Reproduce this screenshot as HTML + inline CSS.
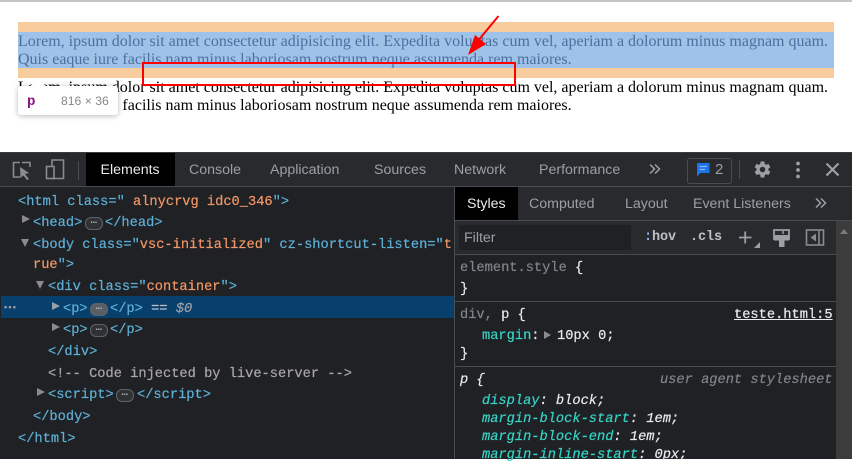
<!DOCTYPE html>
<html><head><meta charset="utf-8">
<style>
html,body{margin:0;padding:0;width:852px;height:459px;overflow:hidden;background:#fff}
.a{position:absolute;white-space:pre}
.box{position:absolute}
.s{font-family:"Liberation Serif",serif;font-size:16px;line-height:18px;color:#000}
.m{font-family:"Liberation Mono",monospace;font-size:13.7px;line-height:18px;color:#9aa0a6;-webkit-text-stroke:.2px}
.t{font-family:"Liberation Sans",sans-serif;font-size:14.2px;line-height:18px;color:#9aa0a6}
.b{color:#5db0d7}.o{color:#f29766}.l{color:#e8eaed}.g{color:#35d4c7}.i{font-style:italic}
.tri-r{position:absolute;width:0;height:0;border-left:8px solid #8b8b8b;border-top:4.5px solid transparent;border-bottom:4.5px solid transparent}
.tri-d{position:absolute;width:0;height:0;border-top:8px solid #8b8b8b;border-left:4.5px solid transparent;border-right:4.5px solid transparent}
.dots{position:absolute;width:16px;height:11px;border:1px solid #5f6368;background:#303134;border-radius:6px;color:#bdc1c6;font:bold 5px/11px "Liberation Sans",sans-serif;text-align:center;letter-spacing:.5px}
</style></head><body>
<div class="box" style="left:0;top:0;width:852px;height:2px;background:#c8c4c6"></div>

<div class="box" style="left:18px;top:22px;width:816px;height:56px;background:#f9cc9d"></div>
<div class="box" style="left:18px;top:32px;width:816px;height:36px;background:#9fc3e8"></div>
<div class="a s" style="left:18px;top:33px;color:#4d6f9f">Lorem, ipsum dolor sit amet consectetur adipisicing elit. Expedita voluptas cum vel, aperiam a dolorum minus magnam quam.</div>
<div class="a s" style="left:18px;top:51px;color:#4d6f9f">Quis eaque iure facilis nam minus laboriosam nostrum neque assumenda rem maiores.</div>
<div class="a s" style="left:18px;top:79px">Lorem, ipsum dolor sit amet consectetur adipisicing elit. Expedita voluptas cum vel, aperiam a dolorum minus magnam quam.</div>
<div class="a s" style="left:18px;top:97px">Quis eaque iure facilis nam minus laboriosam nostrum neque assumenda rem maiores.</div>

<div class="box" style="left:18px;top:86px;width:100px;height:29px;background:#fff;border-radius:3px;box-shadow:0 1px 6px rgba(0,0,0,.28)"></div>
<div class="box" style="left:29px;top:80px;width:0;height:0;border-left:9px solid transparent;border-right:9px solid transparent;border-bottom:7px solid #fff"></div>
<div class="a" style="left:27px;top:94px;font:bold 14px/16px 'Liberation Mono',monospace;color:#881280">p</div>
<div class="a" style="left:61px;top:93px;font:12.2px/16px 'Liberation Sans',sans-serif;color:#888">816 × 36</div>

<div class="box" style="left:142px;top:62px;width:370px;height:20px;border:2px solid #f00"></div>
<svg class="box" style="left:460px;top:10px" width="45" height="50" viewBox="0 0 45 50"><line x1="38.500" y1="6" x2="17" y2="32" stroke="#f00" stroke-width="2"/><polygon points="8,45 15,25 26,34" fill="#f00"/></svg>

<!-- devtools -->
<div class="box" style="left:0;top:152px;width:852px;height:307px;background:#202124"></div>
<div class="box" style="left:0;top:153px;width:852px;height:33px;background:#292a2d;border-bottom:1px solid #494c50"></div>
<div class="box" style="left:0;top:152px;width:852px;height:1px;background:#3c3c3c"></div>

<svg class="box" style="left:0;top:152px" width="90" height="34" viewBox="0 0 90 34" fill="none" stroke="#8a8b8d" stroke-width="1.600">
<path d="M20 10.500 H13.500 V25 H20 M22 10.500 H30 V15"/>
<path d="M20 15 L29 21 L25 22 L29 27 L27 28 L23.500 23.500 L20.500 26 Z" fill="#8a8b8d" stroke="none"/>
<path d="M52 14 V8 H63.500 V26.500 H52"/>
<rect x="46.500" y="14.500" width="7.500" height="12"/>
<line x1="78.500" y1="9" x2="78.500" y2="28" stroke="#4a4c50" stroke-width="1"/>
</svg>

<div class="box" style="left:86px;top:153px;width:89px;height:33px;background:#000"></div>
<div class="a t" style="left:100.500px;top:161px;color:#e8eaed">Elements</div>
<div class="a t" style="left:189px;top:161px">Console</div>
<div class="a t" style="left:270px;top:161px">Application</div>
<div class="a t" style="left:374px;top:161px">Sources</div>
<div class="a t" style="left:454px;top:161px">Network</div>
<div class="a t" style="left:539px;top:161px">Performance</div>
<svg class="box" style="left:648px;top:162px" width="14" height="14" viewBox="0 0 14 14" fill="none" stroke="#9aa0a6" stroke-width="1.500"><path d="M2 2.500 L6.500 7 L2 11.500 M7 2.500 L11.500 7 L7 11.500"/></svg>

<div class="box" style="left:687px;top:157.500px;width:43px;height:24px;border:1px solid #4a4c50;border-radius:3px"></div>
<svg class="box" style="left:696px;top:162px" width="15" height="16" viewBox="0 0 15 16"><path d="M1 1 H13.500 V11 H4.500 L1 14.500 Z" fill="#1a73e8"/><path d="M3.500 4.500 H11 M3.500 7.500 H9" stroke="#cfe2fb" stroke-width="1.200" stroke-opacity=".6"/></svg>
<div class="a" style="left:715px;top:161px;font:15px/18px 'Liberation Sans',sans-serif;color:#9aa0a6">2</div>
<div class="box" style="left:739px;top:160px;width:1px;height:19px;background:#4a4c50"></div>
<svg class="box" style="left:753px;top:160px" width="19" height="19" viewBox="0 0 24 24"><path fill="#9aa0a6" fill-rule="evenodd" d="M19.400 13a7.500 7.500 0 0 0 0-2l2.500-1.900-2.400-4.200-3 1.200a7.500 7.500 0 0 0-1.700-1L14.400 1.900H9.600L9.200 5.100a7.500 7.500 0 0 0-1.700 1l-3-1.200L2.100 9.100 4.600 11a7.500 7.500 0 0 0 0 2l-2.500 1.900 2.400 4.200 3-1.200a7.500 7.500 0 0 0 1.700 1l.4 3.200h4.800l.4-3.200a7.500 7.500 0 0 0 1.700-1l3 1.200 2.400-4.200zM12 15.500a3.500 3.500 0 1 1 0-7 3.500 3.500 0 0 1 0 7z"/></svg>
<svg class="box" style="left:794px;top:161px" width="8" height="18" viewBox="0 0 8 18" fill="#9aa0a6"><circle cx="4" cy="2.500" r="1.900"/><circle cx="4" cy="9" r="1.900"/><circle cx="4" cy="15.500" r="1.900"/></svg>
<svg class="box" style="left:825px;top:162px" width="15" height="15" viewBox="0 0 15 15" stroke="#9aa0a6" stroke-width="2.200"><path d="M1.500 1.500 L13.500 13.500 M13.500 1.500 L1.500 13.500"/></svg>

<!-- dom tree -->
<div class="box" style="left:1px;top:296px;width:453px;height:22px;background:#073f6d"></div>
<div class="a" style="left:4px;top:300px;font:bold 9px/14px 'Liberation Sans',sans-serif;color:#9aa0a6;letter-spacing:1.200px">•••</div>

<div class="a m" style="left:18px;top:194px"><span class="b">&lt;html class="</span><span class="o"> alnycrvg idc0_346</span><span class="b">"&gt;</span></div>
<div class="tri-r" style="left:22px;top:215px"></div>
<div class="a m" style="left:33px;top:215px"><span class="b">&lt;head&gt;</span></div>
<div class="dots" style="left:85px;top:217px">•••</div>
<div class="a m" style="left:105px;top:215px"><span class="b">&lt;/head&gt;</span></div>
<div class="tri-d" style="left:21px;top:239px"></div>
<div class="a m" style="left:33px;top:237px;width:421px;overflow:hidden"><span class="b">&lt;body class="</span><span class="o">vsc-initialized</span><span class="b">" cz-shortcut-listen="</span><span class="o">t</span></div>
<div class="a m" style="left:33px;top:257px"><span class="o">rue</span><span class="b">"&gt;</span></div>
<div class="tri-d" style="left:36px;top:281px"></div>
<div class="a m" style="left:48px;top:279px"><span class="b">&lt;div class="</span><span class="o">container</span><span class="b">"&gt;</span></div>
<div class="tri-r" style="left:52px;top:302px;border-left-color:#9aa0a6"></div>
<div class="a m" style="left:63px;top:301px"><span class="b">&lt;p&gt;</span></div>
<div class="dots" style="left:90px;top:303px;background:#5a5f65">•••</div>
<div class="a m" style="left:110px;top:301px"><span class="b">&lt;/p&gt;</span> <span style="color:#bdc1c6">==</span> <span class="i">$0</span></div>
<div class="tri-r" style="left:52px;top:323px"></div>
<div class="a m" style="left:63px;top:322px"><span class="b">&lt;p&gt;</span></div>
<div class="dots" style="left:90px;top:324px">•••</div>
<div class="a m" style="left:110px;top:322px"><span class="b">&lt;/p&gt;</span></div>
<div class="a m" style="left:48px;top:344px"><span class="b">&lt;/div&gt;</span></div>
<div class="a m" style="left:48px;top:366px;color:#a8a8a8">&lt;!-- Code injected by live-server --&gt;</div>
<div class="tri-r" style="left:37px;top:388px"></div>
<div class="a m" style="left:48px;top:387px"><span class="b">&lt;script&gt;</span></div>
<div class="dots" style="left:116px;top:389px">•••</div>
<div class="a m" style="left:137px;top:387px"><span class="b">&lt;/script&gt;</span></div>
<div class="a m" style="left:33px;top:409px"><span class="b">&lt;/body&gt;</span></div>
<div class="a m" style="left:18px;top:431px"><span class="b">&lt;/html&gt;</span></div>

<!-- styles pane -->
<div class="box" style="left:454px;top:187px;width:1px;height:272px;background:#494c50"></div>
<div class="box" style="left:455px;top:187px;width:397px;height:33px;background:#292a2d;border-bottom:1px solid #494c50"></div>
<div class="box" style="left:455px;top:187px;width:63px;height:33px;background:#000"></div>
<div class="a t" style="left:467px;top:195px;color:#e8eaed">Styles</div>
<div class="a t" style="left:529px;top:195px">Computed</div>
<div class="a t" style="left:625px;top:195px">Layout</div>
<div class="a t" style="left:693px;top:195px">Event Listeners</div>
<svg class="box" style="left:814px;top:196px" width="14" height="14" viewBox="0 0 14 14" fill="none" stroke="#9aa0a6" stroke-width="1.500"><path d="M2 2.500 L6.500 7 L2 11.500 M7 2.500 L11.500 7 L7 11.500"/></svg>

<div class="box" style="left:455px;top:221px;width:381px;height:33px;background:#292a2d;border-bottom:1px solid #494c50"></div>
<div class="box" style="left:459px;top:225px;width:172px;height:25px;background:#202124"></div>
<div class="a t" style="left:464px;top:229px;color:#9aa0a6">Filter</div>
<div class="a" style="left:644px;top:229px;font:bold 13.500px/18px 'Liberation Mono',monospace;color:#bdc1c6;letter-spacing:-.1px"><span style="color:#8ab4f8">:</span>hov</div>
<div class="a" style="left:690px;top:229px;font:bold 13.500px/18px 'Liberation Mono',monospace;color:#bdc1c6;letter-spacing:-.1px">.cls</div>
<svg class="box" style="left:736px;top:227px" width="26" height="24" viewBox="0 0 26 24"><path d="M3 10.500 H15.500 M9.200 4.500 V16.500" stroke="#9aa0a6" stroke-width="1.800"/><path d="M24 15 V21 H18 Z" fill="#9aa0a6"/></svg>
<svg class="box" style="left:772px;top:228px" width="20" height="21" viewBox="0 0 20 21"><path d="M2 2 H17 V11 H2 Z" fill="none" stroke="#9aa0a6" stroke-width="1.800"/><path d="M11 3 V6" stroke="#9aa0a6" stroke-width="1.500"/><path d="M2 7 H17 V12.500 H12.500 V19 H7 V12.500 H2 Z" fill="#9aa0a6"/></svg>
<svg class="box" style="left:804px;top:228px" width="22" height="19" viewBox="0 0 22 19" fill="none" stroke="#8a8b8d" stroke-width="1.600"><rect x="2.500" y="2" width="17" height="15"/><line x1="15" y1="2" x2="15" y2="17"/><path d="M12 5.500 V13.500 L6.500 9.500 Z" fill="#8a8b8d" stroke="none"/></svg>

<div class="box" style="left:836px;top:221px;width:16px;height:238px;background:#3c3c3c"></div>
<div class="box" style="left:840px;top:229px;width:0;height:0;border-left:4px solid transparent;border-right:4px solid transparent;border-bottom:5px solid #7b7b7b"></div>

<div class="a m" style="left:460px;top:260px;color:#808489">element.style <span class="l">{</span></div>
<div class="a m l" style="left:460px;top:281px;color:#e8eaed">}</div>
<div class="box" style="left:455px;top:301px;width:381px;height:1px;background:#494c50"></div>
<div class="a m" style="left:460px;top:307px;color:#808489">div, <span class="l">p {</span></div>
<div class="a m" style="left:734px;top:307px;color:#e8eaed;text-decoration:underline">teste.html:5</div>
<div class="a m" style="left:482px;top:328px"><span class="g">margin</span><span class="l">:</span></div>
<div class="tri-r" style="left:544px;top:331px;border-left-width:7px;border-top-width:4px;border-bottom-width:4px"></div>
<div class="a m l" style="left:557px;top:328px">10px 0;</div>
<div class="a m l" style="left:460px;top:346px">}</div>
<div class="box" style="left:455px;top:366px;width:381px;height:1px;background:#494c50"></div>
<div class="a m i l" style="left:460px;top:372px">p {</div>
<div class="a m i" style="left:660px;top:372px;color:#808489">user agent stylesheet</div>
<div class="a m i" style="left:482px;top:393px"><span class="g">display</span><span class="l">: block;</span></div>
<div class="a m i" style="left:482px;top:411px"><span class="g">margin-block-start</span><span class="l">: 1em;</span></div>
<div class="a m i" style="left:482px;top:429px"><span class="g">margin-block-end</span><span class="l">: 1em;</span></div>
<div class="a m i" style="left:482px;top:447px"><span class="g">margin-inline-start</span><span class="l">: 0px;</span></div>
</body></html>
